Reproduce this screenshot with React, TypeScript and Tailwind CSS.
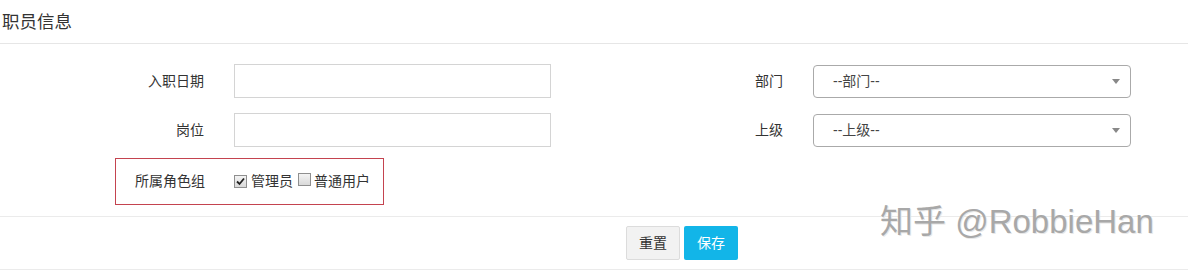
const font = { fontFamily: '"Liberation Sans", "Noto Sans CJK SC", sans-serif' }

function Checkbox({ checked }: { checked?: boolean }) {
  return (
    <span className="inline-flex h-[13px] w-[13px] items-center justify-center border border-[#8f8f8f] bg-gradient-to-b from-[#f4f4f4] to-[#d9d9d9]">
      {checked && (
        <svg width="9" height="9" viewBox="0 0 9 9">
          <path d="M1 4.5 L3.5 7 L8 1.5" fill="none" stroke="#222" strokeWidth="1.8" />
        </svg>
      )}
    </span>
  )
}

function TextInput() {
  return <div className="ml-[30px] h-[34px] w-[317px] border border-[#d4d4d4] bg-white" />
}

function SelectBox({ placeholder }: { placeholder: string }) {
  return (
    <div className="ml-[30px] flex h-[33px] w-[318px] items-center justify-between rounded-[4px] border border-[#aaa] bg-white pl-[19px] pr-[10px] text-[14px] text-[#444]">
      <span>{placeholder}</span>
      <svg width="8" height="5" viewBox="0 0 8 5">
        <path d="M0 0 L8 0 L4 5 Z" fill="#888" />
      </svg>
    </div>
  )
}

export default function App() {
  return (
    <div className="relative h-[272px] w-[1188px] overflow-hidden bg-white text-[#333]" style={font}>
      <div className="flex h-[44px] items-center border-b border-[#e6e6e6] pl-[2px] pt-[2px] text-[17.5px]">
        职员信息
      </div>

      <div className="flex h-[172px] flex-col pt-[20px]">
        <div className="flex items-center">
          <label className="w-[204px] text-right text-[14px]">入职日期</label>
          <TextInput />
          <label className="w-[232px] text-right text-[14px]">部门</label>
          <SelectBox placeholder="--部门--" />
        </div>

        <div className="mt-[15px] flex items-center">
          <label className="w-[204px] text-right text-[14px]">岗位</label>
          <TextInput />
          <label className="w-[232px] text-right text-[14px]">上级</label>
          <SelectBox placeholder="--上级--" />
        </div>

        <div className="ml-[115px] mt-[11px] flex h-[47px] w-[269px] items-center border border-[#c4434f] text-[14px]">
          <label className="w-[89px] text-right">所属角色组</label>
          <div className="ml-[29px] flex items-center">
            <Checkbox checked />
            <span className="ml-[4px]">管理员</span>
            <span className="ml-[5px]"><Checkbox /></span>
            <span className="ml-[3px]">普通用户</span>
          </div>
        </div>
      </div>

      <div className="flex h-[54px] items-center border-t border-b border-[#ebebeb] pl-[626px]">
        <button className="h-[34px] w-[54px] rounded-[2px] border border-[#dcdcdc] bg-[#f2f2f2] text-[14px] text-[#333]">
          重置
        </button>
        <button className="ml-[4px] h-[34px] w-[54px] rounded-[2px] bg-[#12b5e8] text-[14px] text-white">
          保存
        </button>
      </div>

      <div
        className="absolute left-[880px] top-[205px] text-[33px] leading-none text-[#a8a8a8]"
        style={{ ...font, textShadow: '1px 1px 0 #e8e8e8' }}
      >
        知乎 @RobbieHan
      </div>
    </div>
  )
}
